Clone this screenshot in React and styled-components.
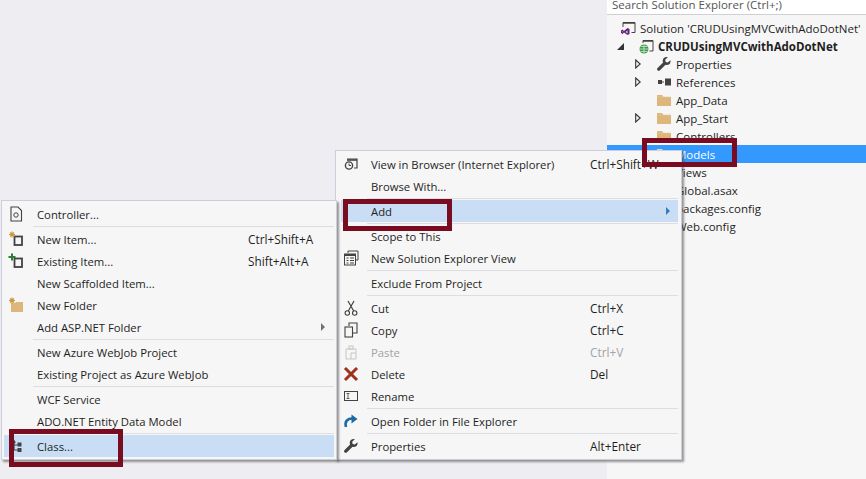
import React from "react";
import styled, { createGlobalStyle } from "styled-components";

const Global = createGlobalStyle`
  html, body { margin: 0; padding: 0; background: #eeeef2; }
  #root { width: 866px; height: 479px; overflow: hidden; }
  * { box-sizing: border-box; }
`;

const Page = styled.div`
  position: relative;
  width: 866px;
  height: 479px;
  display: flex;
  justify-content: flex-end;
  background: #eeeef2;
  overflow: hidden;
  font-family: "Open Sans", "Noto Sans", sans-serif;
  font-size: 11.5px;
  color: #1e1e1e;
`;

const Explorer = styled.aside`
  width: 259px;
  height: 100%;
  background: #f6f6f6;
`;
const SearchBox = styled.div`
  height: 15px;
  background: #fff;
  border-bottom: 1px solid #cfcfd6;
  padding-left: 5px;
  line-height: 10px;
  color: #555;
  white-space: nowrap;
  overflow: hidden;
`;
const Tree = styled.div`
  padding-top: 4px;
`;
const TreeRow = styled.div`
  height: 18px;
  display: flex;
  align-items: center;
  padding-left: ${(p) => p.$indent}px;
  background: ${(p) => (p.$selected ? "#3399ff" : "transparent")};
  color: ${(p) => (p.$selected ? "#fff" : "#1e1e1e")};
  font-weight: ${(p) => (p.$bold ? 700 : 400)};
  white-space: nowrap;
`;
const Twisty = styled.span`
  width: 24px;
  padding-left: 3px;
  display: flex;
  justify-content: flex-start;
  flex: none;
`;
const TreeIcon = styled.span`
  width: 16px;
  display: flex;
  justify-content: center;
  margin-right: 4px;
  flex: none;
`;

const Menu = styled.div`
  position: absolute;
  left: ${(p) => p.$left}px;
  top: ${(p) => p.$top}px;
  width: ${(p) => p.$width}px;
  height: ${(p) => p.$height}px;
  z-index: ${(p) => p.$z};
  padding: 2px ${(p) => p.$padR}px 0 ${(p) => p.$padL}px;
  background: #f6f6f6;
  border: 1px solid #cccedb;
  box-shadow: 2px 2px 2px rgba(70, 70, 70, 0.55);
  font-size: 11.3px;
`;
const Row = styled.div`
  height: 22px;
  display: flex;
  align-items: center;
  white-space: nowrap;
  background: ${(p) => (p.$active ? "#c9def5" : "transparent")};
  color: ${(p) => (p.$disabled ? "#a2a4a5" : "#1e1e1e")};
`;
const Gutter = styled.span`
  width: ${(p) => p.$w}px;
  display: flex;
  justify-content: center;
  flex: none;
`;
const Label = styled.span`
  width: ${(p) => p.$w}px;
  flex: none;
`;
const Shortcut = styled.span`
  flex: 1;
  font-size: 11.8px;
  color: ${(p) => (p.$disabled ? "#a2a4a5" : "#1e1e1e")};
`;
const Arrow = styled.span`
  margin-left: auto;
  margin-right: ${(p) => p.$mr}px;
  width: 0;
  height: 0;
  border-left: 4px solid ${(p) => p.$color};
  border-top: 4px solid transparent;
  border-bottom: 4px solid transparent;
`;
const Sep = styled.div`
  height: 3px;
  margin-left: ${(p) => p.$ml}px;
  padding-top: 1px;
  &::after {
    content: "";
    display: block;
    height: 1px;
    background: #dddde2;
  }
`;
const Callout = styled.div`
  position: absolute;
  left: ${(p) => p.$left}px;
  top: ${(p) => p.$top}px;
  width: ${(p) => p.$width}px;
  height: ${(p) => p.$height}px;
  border: 5px solid #7a0c22;
  z-index: 5;
`;

const S = ({ children, w = 16, h = 16 }) => (
  <svg width={w} height={h} viewBox="0 0 16 16" style={{ display: "block" }}>{children}</svg>
);
const dark = "#424242";
const Folder = ({ fill = "#dcb67a" }) => (
  <S><path d="M1 3h5l1.500 2H15v9H1z" fill={fill} /><path d="M1 5h14" stroke="#e8cfa4" strokeWidth="0.6" /></S>
);
const Wrench = () => (
  <S><path d="M14.500 4.200 11.800 6.600 9.600 5.900 9.200 3.800 11.800 1.300C9.600.7 7.500 1.600 6.900 3.700 6.600 4.700 6.800 5.700 7.100 6.400L1.600 11.900C.9 12.600.9 13.600 1.500 14.300 2.200 15 3.300 15 4 14.300L9.500 8.800C11.400 9.600 13.600 8.600 14.300 6.800 14.600 5.900 14.700 5 14.500 4.200Z" fill={dark} /></S>
);
const Refs = () => (
  <S><rect x="2" y="6" width="4" height="4" fill={dark} /><rect x="6" y="7.500" width="2" height="1" fill={dark} /><rect x="9" y="4.500" width="6" height="7" fill={dark} /></S>
);
const SolutionIcon = () => (
  <S>
    <path d="M3 7V2.500h12V12.500h-3.500" fill="none" stroke={dark} strokeWidth="1" />
    <path d="M3 3h12" stroke={dark} strokeWidth="1.500" />
    <path d="M1 10.500 2.500 9.500 4 11 7.500 8 9.500 9V14L7.500 15 4 12.500 2.500 14 1 13z" fill="#68217a" />
    <path d="M2.500 11v1.500L3.300 11.700zM7.500 10.500v3L5.500 12z" fill="#e4d6ea" />
  </S>
);
const ProjectIcon = () => (
  <S>
    <path d="M5 5V2.500h10V13h-3.500" fill="none" stroke={dark} strokeWidth="1" />
    <path d="M5 3h10" stroke={dark} strokeWidth="1.500" />
    <circle cx="6" cy="11" r="4.500" fill="#3f9b4a" />
    <path d="M1.500 11h9M6 6.500v9M2.700 8.500h6.600M2.700 13.500h6.600" stroke="#dff0df" strokeWidth="0.7" />
  </S>
);
const BrowserIcon = () => (
  <S>
    <path d="M4 3h10v9h-3" fill="none" stroke={dark} strokeWidth="1.200" />
    <path d="M4 4h10" stroke={dark} strokeWidth="1.600" />
    <circle cx="6" cy="9.500" r="3.600" fill="none" stroke={dark} strokeWidth="1.400" />
    <path d="M6 7.500v2h2" stroke={dark} fill="none" />
  </S>
);
const ExplorerViewIcon = () => (
  <S>
    <path d="M5 3V1h10v9h-2" fill="none" stroke={dark} strokeWidth="1" />
    <rect x="1.500" y="4" width="11" height="11" fill="none" stroke={dark} />
    <path d="M1.500 5h11" stroke={dark} strokeWidth="2" />
    <path d="M3.500 8h2M7 8h4M3.500 10.500h2M7 10.500h4M3.500 13h2M7 13h4" stroke={dark} />
  </S>
);
const Scissors = () => (
  <S>
    <circle cx="4.300" cy="13" r="2.200" fill="none" stroke={dark} strokeWidth="1.100" />
    <circle cx="11.700" cy="13" r="2.200" fill="none" stroke={dark} strokeWidth="1.100" />
    <path d="M5.300 11 11 1M10.700 11 5 1" stroke={dark} strokeWidth="1.200" fill="none" />
  </S>
);
const Copy = () => (
  <S><path d="M6 4V1h8v10h-4" fill="none" stroke={dark} strokeWidth="1.100" /><rect x="2" y="5" width="7.500" height="10" fill="none" stroke={dark} strokeWidth="1.100" /></S>
);
const Paste = () => (
  <S>
    <path d="M3 5h10v10H8M3 5v10h5V9h5" fill="none" stroke="#c6c6c6" />
    <rect x="6" y="2" width="4" height="3" fill="none" stroke="#c6c6c6" />
  </S>
);
const Cross = () => (
  <S><path d="M2 2 14 14M14 2 2 14" stroke="#a1301d" strokeWidth="3" /></S>
);
const Rename = () => (
  <S>
    <rect x="1.500" y="3.500" width="13" height="9" fill="none" stroke={dark} />
    <path d="M3.500 5.500h3M3.500 10.500h3M5 5.500v5" stroke={dark} strokeWidth="0.800" />
  </S>
);
const OpenArrow = () => (
  <S>
    <path d="M3 14C1.500 9 4 5.500 9 5.500" fill="none" stroke="#1c6aa8" strokeWidth="2.600" />
    <path d="M8.500 1.500 14.500 6 8.500 10.500z" fill="#1c6aa8" />
  </S>
);
const Star = ({ color = "#c89a3c" }) => (
  <path d="M4 0.500v6M1 3.500h6M2 1.500l4 4M6 1.500l-4 4" stroke={color} strokeWidth="1.100" />
);
const NewItem = () => (
  <S><rect x="6.500" y="5.500" width="7.500" height="8.500" fill="none" stroke={dark} strokeWidth="1.800" /><Star /></S>
);
const ExistingItem = () => (
  <S><rect x="6.500" y="5.500" width="7.500" height="8.500" fill="none" stroke={dark} strokeWidth="1.800" /><path d="M4 0.500v7M.5 4h7" stroke="#2e7d32" strokeWidth="2" /></S>
);
const NewFolder = () => (
  <S><path d="M3 6h4l1-1h7v10H3z" fill="#dcb67a" /><Star /></S>
);
const Controller = () => (
  <S>
    <path d="M3 1h7l3.500 3.500V15H3z" fill="none" stroke={dark} strokeWidth="1.100" />
    <circle cx="8" cy="9" r="2.200" fill="none" stroke={dark} />
  </S>
);
const ClassIcon = () => (
  <S>
    <path d="M6 2v10h4M6 7h4" stroke={dark} strokeWidth="1.200" fill="none" />
    <path d="M2 4 5 2 8 4 5 7z" fill={dark} />
    <rect x="9.500" y="4.500" width="4" height="4" fill={dark} />
    <rect x="9.500" y="10" width="4" height="4" fill={dark} />
  </S>
);
const TwistOpen = () => (
  <svg width="7" height="7" viewBox="0 0 7 7"><path d="M7 0v7H0z" fill="#333" /></svg>
);
const TwistClosed = () => (
  <svg width="6" height="10" viewBox="0 0 6 10"><path d="M.7 1l4.500 4-4.500 4z" fill="none" stroke="#333" strokeWidth="1.100" /></svg>
);

const tree = [
  { label: "Solution 'CRUDUsingMVCwithAdoDotNet'", indent: 13, icon: <SolutionIcon /> },
  { label: "CRUDUsingMVCwithAdoDotNet", indent: 7, twist: <TwistOpen />, icon: <ProjectIcon />, bold: true },
  { label: "Properties", indent: 25, twist: <TwistClosed />, icon: <Wrench /> },
  { label: "References", indent: 25, twist: <TwistClosed />, icon: <Refs /> },
  { label: "App_Data", indent: 25, blank: true, icon: <Folder /> },
  { label: "App_Start", indent: 25, twist: <TwistClosed />, icon: <Folder /> },
  { label: "Controllers", indent: 25, blank: true, icon: <Folder /> },
  { label: "Models", indent: 25, blank: true, icon: <Folder fill="#e9dcc0" />, selected: true },
  { label: "Views", indent: 25, blank: true, icon: <Folder /> },
  { label: "Global.asax", indent: 25, blank: true },
  { label: "packages.config", indent: 25, blank: true },
  { label: "Web.config", indent: 25, blank: true },
];

const addMenu = [
  { l: "View in Browser (Internet Explorer)", s: "Ctrl+Shift+W", i: <BrowserIcon /> },
  { l: "Browse With..." },
  "-",
  { l: "Add", active: true, arrow: true },
  "-",
  { l: "Scope to This" },
  { l: "New Solution Explorer View", i: <ExplorerViewIcon /> },
  "-",
  { l: "Exclude From Project" },
  "-",
  { l: "Cut", s: "Ctrl+X", i: <Scissors /> },
  { l: "Copy", s: "Ctrl+C", i: <Copy /> },
  { l: "Paste", s: "Ctrl+V", i: <Paste />, disabled: true },
  { l: "Delete", s: "Del", i: <Cross /> },
  { l: "Rename", i: <Rename /> },
  "-",
  { l: "Open Folder in File Explorer", i: <OpenArrow /> },
  "-",
  { l: "Properties", s: "Alt+Enter", i: <Wrench /> },
];

const classMenu = [
  { l: "Controller...", i: <Controller /> },
  "-",
  { l: "New Item...", s: "Ctrl+Shift+A", i: <NewItem /> },
  { l: "Existing Item...", s: "Shift+Alt+A", i: <ExistingItem /> },
  { l: "New Scaffolded Item..." },
  { l: "New Folder", i: <NewFolder /> },
  { l: "Add ASP.NET Folder", arrow: true },
  "-",
  { l: "New Azure WebJob Project" },
  { l: "Existing Project as Azure WebJob" },
  "-",
  { l: "WCF Service" },
  { l: "ADO.NET Entity Data Model" },
  "-",
  { l: "Class...", active: true, i: <ClassIcon /> },
];

const MenuList = ({ items, gutter, gap, labelW, arrowColor, arrowMr }) =>
  items.map((it, n) =>
    it === "-" ? (
      <Sep key={n} $ml={gutter + gap - 4} />
    ) : (
      <Row key={n} $active={it.active} $disabled={it.disabled}>
        <Gutter $w={gutter + gap}>
          <Gutter $w={gutter}>{it.i}</Gutter>
          <Gutter $w={gap} />
        </Gutter>
        <Label $w={labelW}>{it.l}</Label>
        {it.s && <Shortcut $disabled={it.disabled}>{it.s}</Shortcut>}
        {it.arrow && <Arrow $color={arrowColor} $mr={arrowMr} />}
      </Row>
    )
  );

export default function App() {
  return (
    <Page>
      <Global />
      <Explorer>
        <SearchBox>Search Solution Explorer (Ctrl+;)</SearchBox>
        <Tree>
          {tree.map((t) => (
            <TreeRow key={t.label} $indent={t.indent} $bold={t.bold} $selected={t.selected}>
              {(t.twist || t.blank) && <Twisty>{t.twist}</Twisty>}
              <TreeIcon>{t.icon}</TreeIcon>
              {t.label}
            </TreeRow>
          ))}
        </Tree>
      </Explorer>

      <Menu $left={335} $top={150} $width={347} $height={310} $z={2} $padL={5} $padR={3}>
        <MenuList items={addMenu} gutter={20} gap={10} labelW={219} arrowColor="#2f7fbf" arrowMr={8} />
      </Menu>

      <Menu $left={1} $top={200} $width={336} $height={260} $z={3} $padL={2} $padR={2}>
        <MenuList items={classMenu} gutter={24} gap={9} labelW={211} arrowColor="#71717a" arrowMr={9} />
      </Menu>

      <Callout $left={642} $top={138} $width={95} $height={29} />
      <Callout $left={343} $top={199} $width={109} $height={32} />
      <Callout $left={9} $top={429} $width={114} $height={38} />
    </Page>
  );
}
